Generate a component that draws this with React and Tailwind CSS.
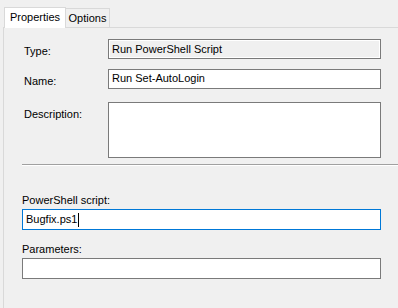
import React from 'react';

function Field({ label, children }) {
  return (
    <div className="flex items-start">
      <div className="w-[104px] pl-[20px] pt-[4px] shrink-0">{label}</div>
      {children}
    </div>
  );
}

export default function App() {
  return (
    <div
      className="w-[398px] h-[308px] bg-[#f0f0f0] overflow-hidden flex flex-col text-[11px] text-black"
      style={{ fontFamily: '"Liberation Sans", Arial, sans-serif' }}
    >
      <div className="h-[27px] flex items-end pl-[4px] shrink-0">
        <div className="relative z-10 h-[21px] w-[62px] bg-white border border-b-0 border-[#d9d9d9] flex items-center justify-center -mb-[1px] pb-[1px]">
          Properties
        </div>
        <div className="h-[19px] w-[44px] bg-[#f0f0f0] border border-l-0 border-b-0 border-[#d9d9d9] flex items-center justify-center">
          Options
        </div>
      </div>

      <div className="flex-1 ml-[3px] border-l border-t border-[#d9d9d9] bg-[#f0f0f0]">
        <div className="flex flex-col pt-[11px]">
          <Field label="Type:">
            <div className="w-[273px] h-[20px] border border-[#7a7a7a] bg-[#f0f0f0] flex items-center pl-[3px] shadow-[inset_0_0_0_1px_#ffffff]">
              Run PowerShell Script
            </div>
          </Field>
          <div className="h-[9px]" />
          <Field label="Name:">
            <div className="w-[273px] h-[20px] border border-[#7a7a7a] bg-white flex items-center pl-[3px]">
              Run Set-AutoLogin
            </div>
          </Field>
          <div className="h-[13px]" />
          <Field label="Description:">
            <div className="w-[273px] h-[56px] border border-[#7a7a7a] bg-white" />
          </Field>

          <div className="mt-[6px] ml-[18px] border-t border-[#a0a0a0] border-b border-b-white" />

          <div className="pl-[18px] flex flex-col">
            <div className="mt-[28px] leading-[13px]">PowerShell script:</div>
            <div className="mt-[2px] w-[359px] h-[21px] border border-[#0078d7] bg-white flex items-center pl-[3px]">
              <span>Bugfix.ps1</span>
              <span className="inline-block w-[1px] h-[14px] bg-black ml-[1px]" />
            </div>
            <div className="mt-[13px] leading-[13px]">Parameters:</div>
            <div className="mt-[2px] w-[359px] h-[21px] border border-[#7a7a7a] bg-white" />
          </div>
        </div>
      </div>
    </div>
  );
}
